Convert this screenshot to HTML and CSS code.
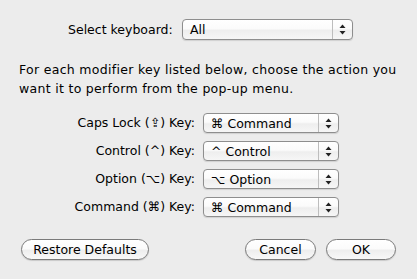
FILE: index.html
```html
<!DOCTYPE html>
<html>
<head>
<meta charset="utf-8">
<link rel="stylesheet" href="styles.css">
</head>
<body>
<div class="dialog">
  <div class="kb-row">
    <span class="kb-label">Select keyboard:</span>
    <div class="popup popup-wide">
      <span class="popup-text">All</span>
      <span class="popup-arrows"><svg width="7" height="11" viewBox="0 0 7 11"><path d="M3.5 0.5 L6.5 4 L0.5 4 Z" fill="#222"/><path d="M0.5 7 L6.5 7 L3.5 10.5 Z" fill="#222"/></svg></span>
    </div>
  </div>
  <p class="intro">For each modifier key listed below, choose the action you<br>want it to perform from the pop-up menu.</p>
  <div class="mods">
    <span class="mod-label">Caps Lock (⇪) Key:</span>
    <div class="popup"><span class="popup-text">⌘ Command</span><span class="popup-arrows"><svg width="7" height="11" viewBox="0 0 7 11"><path d="M3.5 0.5 L6.5 4 L0.5 4 Z" fill="#222"/><path d="M0.5 7 L6.5 7 L3.5 10.5 Z" fill="#222"/></svg></span></div>
    <span class="mod-label">Control (^) Key:</span>
    <div class="popup"><span class="popup-text">^ Control</span><span class="popup-arrows"><svg width="7" height="11" viewBox="0 0 7 11"><path d="M3.5 0.5 L6.5 4 L0.5 4 Z" fill="#222"/><path d="M0.5 7 L6.5 7 L3.5 10.5 Z" fill="#222"/></svg></span></div>
    <span class="mod-label">Option (⌥) Key:</span>
    <div class="popup"><span class="popup-text">⌥ Option</span><span class="popup-arrows"><svg width="7" height="11" viewBox="0 0 7 11"><path d="M3.5 0.5 L6.5 4 L0.5 4 Z" fill="#222"/><path d="M0.5 7 L6.5 7 L3.5 10.5 Z" fill="#222"/></svg></span></div>
    <span class="mod-label">Command (⌘) Key:</span>
    <div class="popup"><span class="popup-text">⌘ Command</span><span class="popup-arrows"><svg width="7" height="11" viewBox="0 0 7 11"><path d="M3.5 0.5 L6.5 4 L0.5 4 Z" fill="#222"/><path d="M0.5 7 L6.5 7 L3.5 10.5 Z" fill="#222"/></svg></span></div>
  </div>
  <div class="buttons">
    <button class="btn btn-restore">Restore Defaults</button>
    <span class="spacer"></span>
    <button class="btn btn-cancel">Cancel</button>
    <button class="btn btn-ok">OK</button>
  </div>
</div>
</body>
</html>
```

FILE: styles.css
```css
html, body {
  margin: 0;
  padding: 0;
  background: #ececec;
}
body {
  font-family: "DejaVu Sans", sans-serif;
  font-size: 12.5px;
  color: #000;
}
.dialog {
  width: 417px;
  height: 279px;
  box-sizing: border-box;
  padding: 19px 0 0 0;
  display: flex;
  flex-direction: column;
}
.kb-row {
  display: flex;
  align-items: center;
  padding-left: 68px;
  gap: 11px;
  height: 21px;
}
.kb-label {
  width: 103px;
  white-space: nowrap;
}
.popup {
  display: flex;
  align-items: stretch;
  box-sizing: border-box;
  height: 20px;
  width: 136px;
  border: 1px solid #8e8e8e;
  border-radius: 4px;
  background: linear-gradient(#ffffff 0%, #fbfbfb 45%, #eeeeee 55%, #f6f6f6 100%);
  box-shadow: 0 1px 1px rgba(0, 0, 0, 0.12);
}
.popup-wide {
  width: 171px;
  height: 21px;
}
.popup-text {
  flex: 1;
  padding-left: 7px;
  display: flex;
  align-items: center;
  white-space: nowrap;
}
.popup-arrows {
  width: 19px;
  border-left: 1px solid #bdbdbd;
  display: flex;
  align-items: center;
  justify-content: center;
}
.intro {
  margin: 20px 0 0 19px;
  width: 395px;
  line-height: 19px;
  letter-spacing: 0.3px;
  white-space: nowrap;
}
.mods {
  margin-top: 15px;
  display: grid;
  grid-template-columns: 195px 136px;
  column-gap: 8px;
  row-gap: 8px;
}
.mod-label {
  text-align: right;
  white-space: nowrap;
  line-height: 20px;
}
.buttons {
  margin-top: 22px;
  display: flex;
  padding: 0 21px 0 21px;
  gap: 10px;
}
.spacer {
  flex: 1;
}
.btn {
  font-family: "DejaVu Sans", sans-serif;
  font-size: 12.5px;
  color: #000;
  height: 21px;
  box-sizing: border-box;
  border: 1px solid #7a7a7a;
  border-radius: 11px;
  background: linear-gradient(#ffffff 0%, #fbfbfb 45%, #eeeeee 55%, #f8f8f8 100%);
  box-shadow: 0 1px 1px rgba(0, 0, 0, 0.15);
  padding: 0;
}
.btn-restore { width: 128px; }
.btn-cancel { width: 71px; }
.btn-ok { width: 70px; }
```
